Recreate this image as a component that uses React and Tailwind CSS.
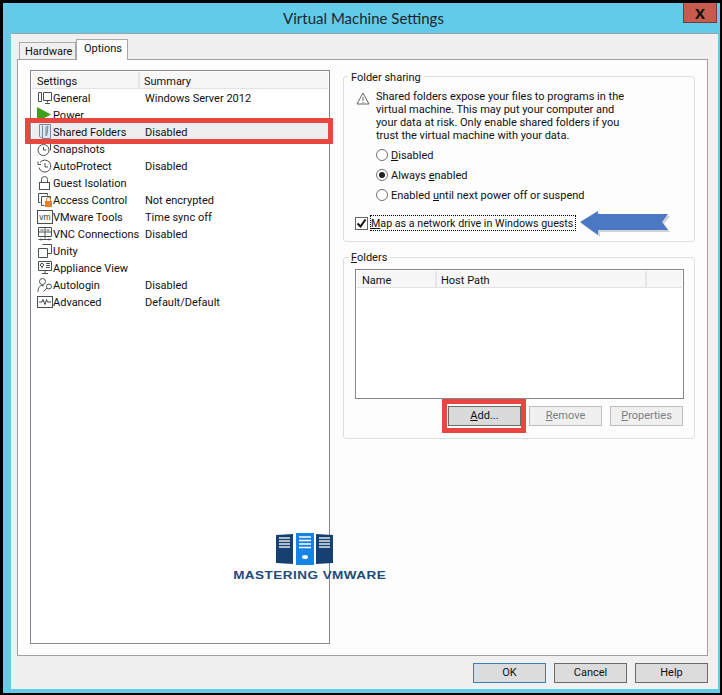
const S = ({ children, w = 16, h = 16, cls = "" }) => (
  <svg width={w} height={h} viewBox={`0 0 ${w} ${h}`} fill="none" stroke="#4a4f55" strokeWidth="1" className={`shrink-0 ${cls}`}>
    {children}
  </svg>
);

const icons = {
  General: (
    <S>
      <path d="M1.500 2.500h3v9h-3zM6.500 2.500h8v8h-8zM10.500 10.500v2M8 13.500h5" />
    </S>
  ),
  Power: (
    <S>
      <path d="M0 0L14 7.500L0 15z" fill="#3f9e1c" stroke="none" />
    </S>
  ),
  "Shared Folders": (
    <S>
      <path d="M2.500 0.500h11v14h-8l-3-2z" fill="#dce8f2" stroke="#7a8a98" />
      <path d="M5.500 1.500v13M9 3l2-1-1 8-1 2z" fill="#c2d6e6" stroke="#7a8a98" />
    </S>
  ),
  Snapshots: (
    <S>
      <circle cx="6.500" cy="9" r="5.500" />
      <path d="M6.500 6v3h3M9 2.500h4.500v7" />
    </S>
  ),
  AutoProtect: (
    <S>
      <path d="M3 4.500a6 6 0 1 1-1 5M1 3.500v3h3M8 5v4h3" />
    </S>
  ),
  "Guest Isolation": (
    <S>
      <rect x="2.500" y="7.500" width="10" height="7" />
      <path d="M4.500 7.500v-3a3 3 0 0 1 6 0v3" />
    </S>
  ),
  "Access Control": (
    <S>
      <path d="M1.500 1.500h9v2M1.500 1.500v9h2M4.500 4.500h9v3M4.500 4.500v9h3" />
      <rect x="8" y="9" width="7" height="6" fill="#ef7d22" stroke="none" />
      <path d="M9.500 9V7.500a2 2 0 0 1 4 0V9" stroke="#ef7d22" />
    </S>
  ),
  "VMware Tools": (
    <S>
      <rect x="0.500" y="1.500" width="15" height="13" />
      <text x="8" y="10.500" textAnchor="middle" fontSize="8.500" fontFamily="'Liberation Sans', sans-serif" fill="#3a3f45" stroke="none">vm</text>
    </S>
  ),
  "VNC Connections": (
    <S>
      <path d="M1.500 1.500h13v9h-13zM1.500 6h13M8 1.500v9M3.500 4h3M9.500 4h3M8 10.500v2M1.500 13.500h13M4 12.500v2M12 12.500v2" />
    </S>
  ),
  Unity: (
    <S>
      <path d="M5.500 1.500h9v9h-4M1.500 5.500h9v9h-9z" />
    </S>
  ),
  "Appliance View": (
    <S>
      <path d="M1.500 1.500h13v9h-13zM5 13.500h6M8 10.500v3" />
      <circle cx="5" cy="5" r="1.600" />
      <path d="M5 6.500v2M9 3.500h4M9 5.500h4M9 7.500h4" />
    </S>
  ),
  Autologin: (
    <S>
      <circle cx="5.500" cy="4.500" r="3" />
      <path d="M1 15c0-4 1.500-6.500 4-6.500 1 0 1.500.3 2 .7" />
      <circle cx="12" cy="9.500" r="2.500" />
      <path d="M10 11l-3.500 3.500" />
    </S>
  ),
  Advanced: (
    <S>
      <rect x="0.500" y="2.500" width="15" height="11" />
      <path d="M2 8h3l1-2.500 2 5 1.500-5 1 2.500h3.500" stroke="#3a3f45" />
    </S>
  ),
};

const rows = [
  ["General", "Windows Server 2012"],
  ["Power", ""],
  ["Shared Folders", "Disabled"],
  ["Snapshots", ""],
  ["AutoProtect", "Disabled"],
  ["Guest Isolation", ""],
  ["Access Control", "Not encrypted"],
  ["VMware Tools", "Time sync off"],
  ["VNC Connections", "Disabled"],
  ["Unity", ""],
  ["Appliance View", ""],
  ["Autologin", "Disabled"],
  ["Advanced", "Default/Default"],
];

const Radio = ({ checked, children }) => (
  <div className="h-[20px] flex items-center gap-[3px]">
    <span className="w-[12px] h-[12px] rounded-full border border-[#707070] bg-white flex items-center justify-center">
      {checked && <span className="w-[6px] h-[6px] rounded-full bg-[#222]" />}
    </span>
    <span className="pt-[2px]">{children}</span>
  </div>
);

const Btn = ({ children, cls = "" }) => (
  <div className={`w-[73px] h-[20px] flex items-center justify-center border ${cls}`}>{children}</div>
);

const Legend = ({ children, cls = "top-[-7px]" }) => (
  <div className={`absolute left-[4px] px-[3px] bg-[#fdfdfd] leading-[16px] ${cls}`}>{children}</div>
);

export default function App() {
  return (
    <div
      className="relative w-[722px] h-[695px] bg-black pt-[3px] pl-[3px] pr-[2px] pb-[2px] overflow-hidden text-[11px] text-[#111]"
      style={{ fontFamily: "Roboto, 'Noto Sans', sans-serif" }}
    >
      <div className="h-full bg-[#62cbe9] flex flex-col">
        <div
          className="relative h-[30px] shrink-0 flex items-center justify-center text-[15px] pl-[4px] text-[#1c2630]"
          style={{ fontFamily: "Lato, sans-serif" }}
        >
          Virtual Machine Settings
          <div className="absolute right-[3px] top-0 w-[34px] h-[20px] bg-[#c75b50] border border-[#7c3a34] border-t-0 flex items-center justify-center text-[#111] text-[19px] font-bold leading-none pb-[3px]">
            x
          </div>
        </div>
        <div className="flex-1 ml-[8px] mr-[2px] mb-[4px] bg-[#f0f0f0] border-t border-[#9aa3a8] flex flex-col px-[6px]">
          <div className="h-[25px] flex items-end shrink-0 relative z-10 pl-[2px]">
            <div className="w-[57px] h-[17px] mb-0 border border-b-0 border-[#a9a9a9] bg-[#f0f0f0] pl-[5px] leading-[18px]">Hardware</div>
            <div className="w-[52px] h-[21px] mb-[-1px] border border-b-0 border-[#a9a9a9] bg-[#fdfdfd] pl-[7px] leading-[17px]">Options</div>
          </div>
          <div className="h-[597px] w-[691px] bg-[#fdfdfd] border border-[#a0a0a0] flex pl-[12px] pt-[10px] gap-[13px]">
            <div className="relative w-[300px] h-[574px] bg-white border border-[#828790] px-[1px] pt-[1px]">
              <div className="h-[17px] flex bg-[#f7f7f7] border-b border-[#e3e3e3]">
                <div className="w-[108px] pl-[5px] border-r-2 border-[#e6e6e6] leading-[20px]">Settings</div>
                <div className="pl-[4px] leading-[20px]">Summary</div>
              </div>
              <div>
                {rows.map(([name, sum]) => (
                  <div key={name} className={`h-[17px] flex items-center ${name === "Shared Folders" ? "bg-[#eeeeee]" : ""}`}>
                    <div className="w-[113px] flex items-center pl-[5px] whitespace-nowrap">
                      {icons[name]}
                      <span className="pt-[3px]">{name}</span>
                    </div>
                    <div className="whitespace-nowrap pt-[3px]">{sum}</div>
                  </div>
                ))}
              </div>
              <div className="absolute left-[203px] top-[462px] w-[152px] flex flex-col items-center">
                <svg width="58" height="32" viewBox="0 0 58 32" className="ml-[-10px]">
                  <path d="M0 2l17-1v30l-17-1z" fill="#16406f" />
                  <rect x="20" y="0" width="18" height="32" fill="#1684e6" />
                  <path d="M40 1l17 1v28l-17 1z" fill="#16406f" />
                  <path d="M3 5h11M3 8h11M3 11h11M3 14h11M43 5h11M43 8h11M43 11h11M43 14h11" stroke="#dfe8f0" strokeWidth="1.600" />
                  <path d="M23 4h12M23 7.500h12M23 11h12M23 14.500h12" stroke="#fff" strokeWidth="1.600" />
                  <ellipse cx="29" cy="24" rx="3" ry="2" fill="#fff" />
                </svg>
                <div
                  className="mt-[5px] text-[#1e4a7c] text-[10px] font-bold whitespace-nowrap tracking-[0.35px] leading-[12px] scale-x-[1.35] ml-[-1px]"
                  style={{ fontFamily: "'Liberation Sans', sans-serif" }}
                >
                  MASTERING VMWARE
                </div>
              </div>
            </div>

            <div className="w-[352px] pt-[6px] flex flex-col gap-[15px]">
              <div className="relative h-[166px] border border-[#dcdfe3] rounded-[3px] pl-[12px] pt-[13px]">
                <Legend>Folder sharing</Legend>
                <div className="flex gap-[6px]">
                  <svg width="14" height="13" viewBox="0 0 14 13" className="shrink-0 mt-[2px]" fill="none" stroke="#666">
                    <path d="M7 1L13 12H1z" />
                    <path d="M7 5v4M7 10v1" />
                  </svg>
                  <div className="leading-[13px] whitespace-nowrap">
                    Shared folders expose your files to programs in the
                    <br />
                    virtual machine. This may put your computer and
                    <br />
                    your data at risk. Only enable shared folders if you
                    <br />
                    trust the virtual machine with your data.
                  </div>
                </div>
                <div className="mt-[3px] ml-[20px]">
                  <Radio><u>D</u>isabled</Radio>
                  <Radio checked>Always <u>e</u>nabled</Radio>
                  <Radio>Enabled <u>u</u>ntil next power off or suspend</Radio>
                </div>
                <div className="absolute left-[11px] top-[138px] flex items-center gap-[2px]">
                  <span className="w-[13px] h-[13px] border border-[#666] bg-white flex items-center justify-center">
                    <svg width="11" height="11" viewBox="0 0 11 11" fill="none" stroke="#111" strokeWidth="2">
                      <path d="M1.500 5.500l3 3 5-7" />
                    </svg>
                  </span>
                  <span className="h-[16px] w-[206px] border border-dotted border-black leading-[15px] whitespace-nowrap text-[10.7px]">
                    <u>M</u>ap as a network drive in Windows guests
                  </span>
                </div>
              </div>

              <div className="relative h-[182px] border border-[#dcdfe3] rounded-[3px] pl-[11px] pt-[11px]">
                <Legend cls="top-[-8px]"><u>F</u>olders</Legend>
                <div className="w-[329px] h-[130px] bg-white border border-[#828790] px-[1px] pt-[1px]">
                  <div className="h-[17px] flex bg-[#f7f7f7] border-b border-[#e3e3e3]">
                    <div className="w-[80px] pl-[5px] border-r-2 border-[#e6e6e6] leading-[20px]">Name</div>
                    <div className="w-[210px] pl-[4px] border-r-2 border-[#e6e6e6] leading-[20px]">Host Path</div>
                  </div>
                </div>
                <div className="mt-[7px] w-[328px] flex justify-end gap-[8px]">
                  <Btn cls="border-[#6a6a6a] bg-[#dadada]"><span><u>A</u>dd...</span></Btn>
                  <Btn cls="border-[#bdbdbd] bg-[#f0f0f0] text-[#7d7d7d]"><span><u>R</u>emove</span></Btn>
                  <Btn cls="border-[#bdbdbd] bg-[#f0f0f0] text-[#7d7d7d]"><span><u>P</u>roperties</span></Btn>
                </div>
              </div>
            </div>
          </div>
          <div className="mt-[7px] w-[691px] flex justify-end gap-[8px]">
            <Btn cls="h-[19px] border-[#3a80b8] bg-[#dcdcdc]">OK</Btn>
            <Btn cls="h-[19px] border-[#6a6a6a] bg-[#dcdcdc]">Cancel</Btn>
            <Btn cls="h-[19px] border-[#6a6a6a] bg-[#dcdcdc]">Help</Btn>
          </div>
        </div>
      </div>

      {/* annotations drawn on top of the screenshot */}
      <div className="absolute left-[25px] top-[118px] w-[308px] h-[26px] border-[5px] border-[#e8463f]" />
      <div className="absolute left-[442px] top-[399px] w-[84px] h-[34px] border-[5px] border-[#e8463f]" />
      <svg className="absolute left-[578px] top-[208px]" width="96" height="32" viewBox="0 0 96 32">
        <path d="M3 14L21 3v3L91 6l-6 8 6 8-70 0v5z" fill="#9aa0a6" opacity="0.45" transform="translate(1 2)" />
        <path d="M2 14L20 3v3L90 6l-6 8 6 8-70 0v5z" fill="#4a78c2" />
      </svg>
    </div>
  );
}
